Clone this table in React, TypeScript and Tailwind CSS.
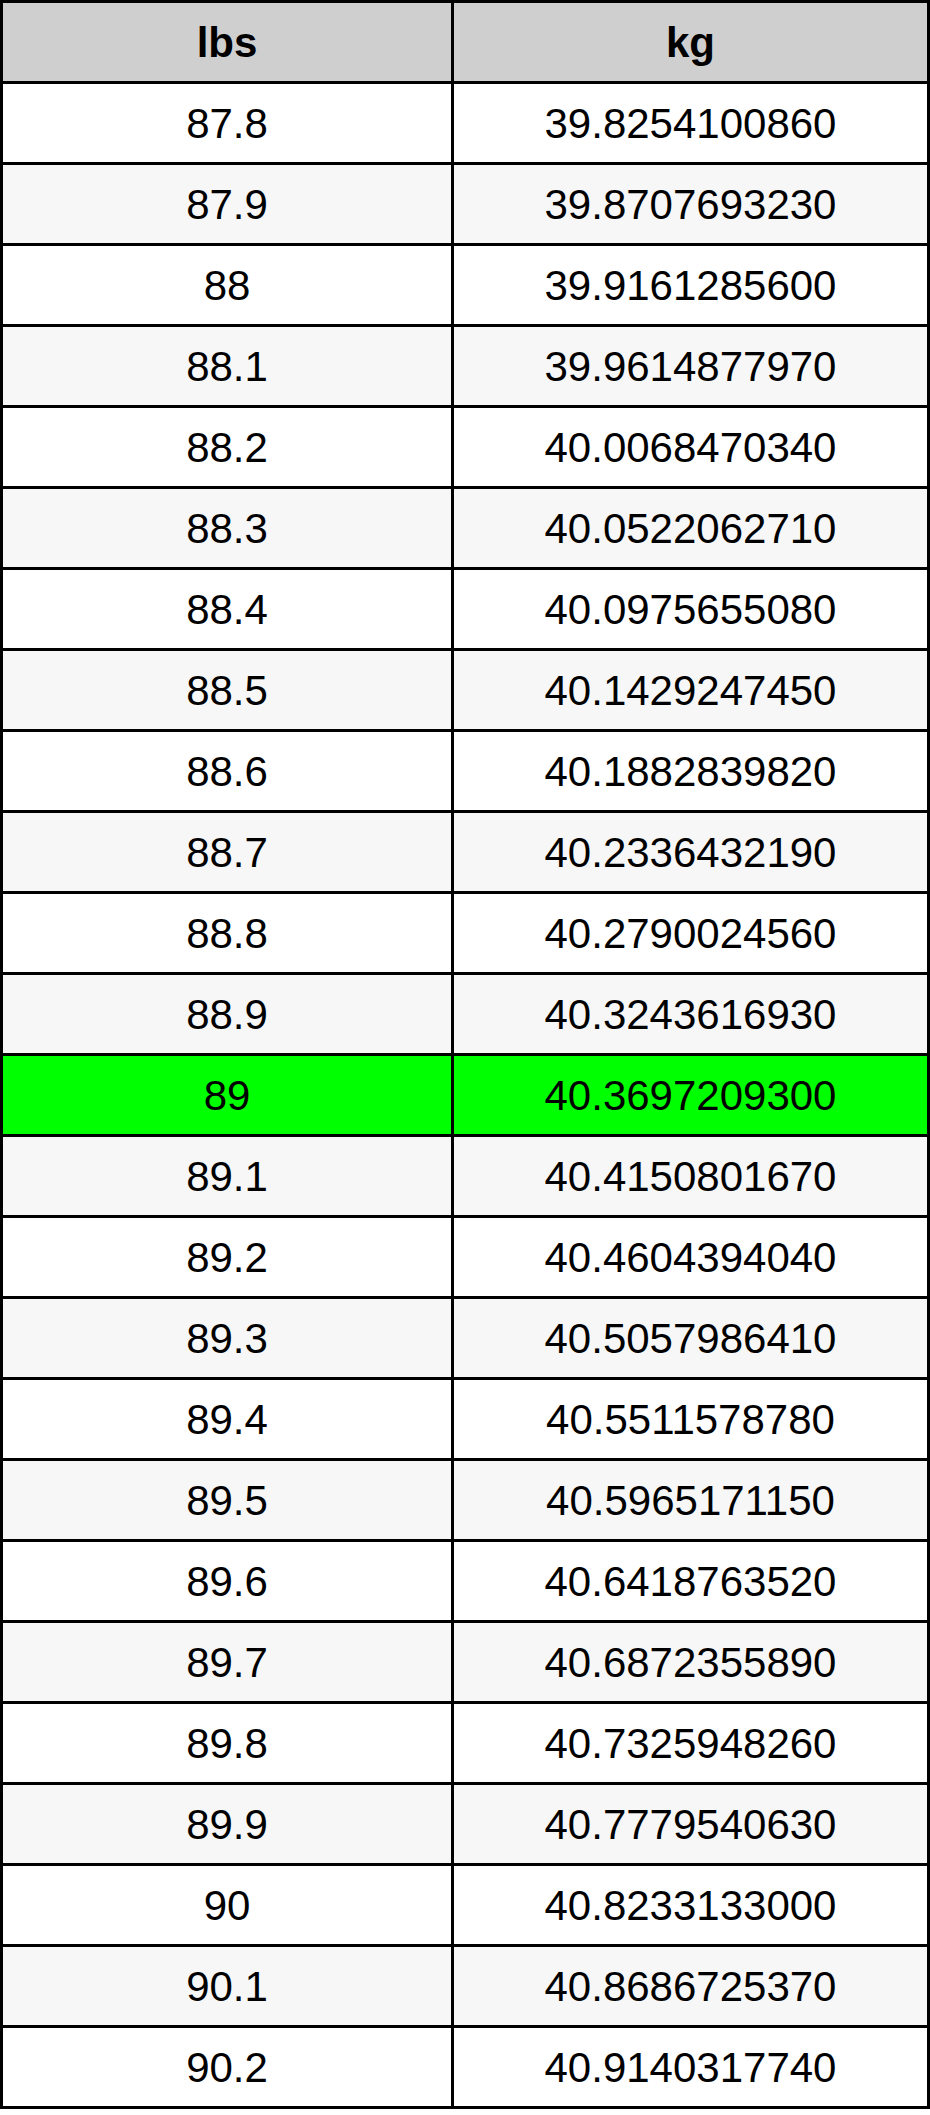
import React from 'react';

const rows: [string, string][] = [
    ['87.8', '39.8254100860'],
    ['87.9', '39.8707693230'],
    ['88', '39.9161285600'],
    ['88.1', '39.9614877970'],
    ['88.2', '40.0068470340'],
    ['88.3', '40.0522062710'],
    ['88.4', '40.0975655080'],
    ['88.5', '40.1429247450'],
    ['88.6', '40.1882839820'],
    ['88.7', '40.2336432190'],
    ['88.8', '40.2790024560'],
    ['88.9', '40.3243616930'],
    ['89', '40.3697209300'],
    ['89.1', '40.4150801670'],
    ['89.2', '40.4604394040'],
    ['89.3', '40.5057986410'],
    ['89.4', '40.5511578780'],
    ['89.5', '40.5965171150'],
    ['89.6', '40.6418763520'],
    ['89.7', '40.6872355890'],
    ['89.8', '40.7325948260'],
    ['89.9', '40.7779540630'],
    ['90', '40.8233133000'],
    ['90.1', '40.8686725370'],
    ['90.2', '40.9140317740'],
];

const HIGHLIGHT = '89';

export default function App() {
    return (
        <div className="w-[930px] bg-white font-['Liberation_Sans',Arial,sans-serif] text-black">
            <div className="border-t-[3px] border-l-[3px] border-black">
                <div className="flex bg-[#cfcfcf] font-bold">
                    <div className="w-[451px] h-[81px] border-r-[3px] border-b-[3px] border-black flex items-center justify-center text-[42px]">lbs</div>
                    <div className="w-[476px] h-[81px] border-r-[3px] border-b-[3px] border-black flex items-center justify-center text-[42px]">kg</div>
                </div>
                {rows.map(([lbs, kg], i) => {
                    const bg = lbs === HIGHLIGHT ? 'bg-[#00ff00]' : i % 2 === 1 ? 'bg-[#f7f7f7]' : 'bg-white';
                    return (
                        <div key={lbs} className={`flex ${bg}`}>
                            <div className="w-[451px] h-[81px] border-r-[3px] border-b-[3px] border-black flex items-center justify-center text-[42px]">{lbs}</div>
                            <div className="w-[476px] h-[81px] border-r-[3px] border-b-[3px] border-black flex items-center justify-center text-[42px]">{kg}</div>
                        </div>
                    );
                })}
            </div>
        </div>
    );
}
